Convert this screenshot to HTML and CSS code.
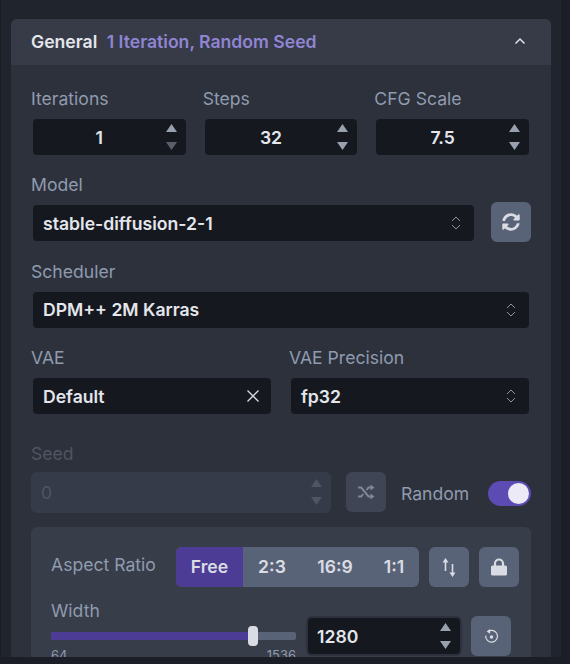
FILE: index.html
```html
<!DOCTYPE html>
<html lang="en">
<head>
    <meta charset="UTF-8">
    <title>General</title>
    <link rel="stylesheet" href="styles.css">
</head>
<body>
    <svg width="0" height="0" class="defs">
        <symbol id="updown" viewBox="0 0 10 16"><path d="M1 6 5 2 9 6M1 10 5 14 9 10" fill="none" stroke="currentColor" stroke-width="1"/></symbol>
        <symbol id="up" viewBox="0 0 11 8"><path d="M5.500 0 11 8H0z" fill="currentColor"/></symbol>
        <symbol id="down" viewBox="0 0 11 8"><path d="M5.500 8 11 0H0z" fill="currentColor"/></symbol>
    </svg>
    <div class="sidebar">
        <div class="panel">
            <div class="panel-header">
                <div class="title">General <span class="summary">1 Iteration, Random Seed</span></div>
                <svg class="chevron" width="12" height="8" viewBox="0 0 12 8"><path d="M1.500 6.500 6 2l4.500 4.500" fill="none" stroke="currentColor" stroke-width="1.500"/></svg>
            </div>
            <div class="panel-body">
                <div class="row three">
                    <div class="field">
                        <div class="label">Iterations</div>
                        <div class="input number center"><span>1</span>
                            <div class="stepper"><svg class="step"><use href="#up"/></svg><svg class="step dim"><use href="#down"/></svg></div>
                        </div>
                    </div>
                    <div class="field">
                        <div class="label">Steps</div>
                        <div class="input number center"><span>32</span>
                            <div class="stepper"><svg class="step"><use href="#up"/></svg><svg class="step"><use href="#down"/></svg></div>
                        </div>
                    </div>
                    <div class="field">
                        <div class="label">CFG Scale</div>
                        <div class="input number center"><span>7.5</span>
                            <div class="stepper"><svg class="step"><use href="#up"/></svg><svg class="step"><use href="#down"/></svg></div>
                        </div>
                    </div>
                </div>

                <div class="row model">
                    <div class="field grow">
                        <div class="label">Model</div>
                        <div class="input select"><span>stable-diffusion-2-1</span><svg class="updown"><use href="#updown"/></svg></div>
                    </div>
                    <button class="icon-btn refresh">
                        <svg width="18" height="18" viewBox="0 0 512 512"><path fill="currentColor" d="M370.700 133.300C339.500 104 298.900 88 255.800 88c-77.500.1-144.300 53.200-162.800 126.900-1.300 5.400-6.100 9.200-11.700 9.200H24.100c-7.500 0-13.200-6.800-11.800-14.200C33.900 94.900 134.800 8 256 8c66.400 0 126.800 26.100 171.300 68.700L463 41c15.100-15.100 41-4.400 41 17v134c0 13.300-10.700 24-24 24H346c-21.400 0-32.100-25.900-17-41l41.700-41.700zM32 296h134c21.400 0 32.100 25.900 17 41l-41.700 41.700c31.200 29.300 71.800 45.300 114.900 45.300 77.400-.1 144.300-53.100 162.800-126.800 1.300-5.400 6.100-9.200 11.700-9.200h57.300c7.500 0 13.200 6.800 11.800 14.200C478.100 417.100 377.200 504 256 504c-66.400 0-126.800-26.100-171.300-68.700L49 471c-15.100 15.100-41 4.400-41-17V320c0-13.300 10.700-24 24-24z"/></svg>
                    </button>
                </div>

                <div class="field">
                    <div class="label">Scheduler</div>
                    <div class="input select"><span>DPM++ 2M Karras</span><svg class="updown"><use href="#updown"/></svg></div>
                </div>

                <div class="row two">
                    <div class="field">
                        <div class="label">VAE</div>
                        <div class="input select"><span>Default</span>
                            <svg class="clear" width="14" height="14" viewBox="0 0 14 14"><path d="M1.500 1.500l11 11M12.500 1.500l-11 11" fill="none" stroke="currentColor" stroke-width="1.300"/></svg>
                        </div>
                    </div>
                    <div class="field">
                        <div class="label">VAE Precision</div>
                        <div class="input select"><span>fp32</span><svg class="updown"><use href="#updown"/></svg></div>
                    </div>
                </div>

                <div class="seed">
                    <div class="label disabled">Seed</div>
                    <div class="seed-row">
                        <div class="input number disabled-input"><span>0</span>
                            <div class="stepper"><svg class="step"><use href="#up"/></svg><svg class="step"><use href="#down"/></svg></div>
                        </div>
                        <button class="icon-btn shuffle">
                            <svg width="18" height="16" viewBox="0 0 18 16"><path d="M1 3.500h3.200l7.300 9H14M1 12.500h3.200l2-2.500M9.500 6l2-2.500H14" fill="none" stroke="currentColor" stroke-width="2"/><path d="M13.500 0.500 17.500 3.500 13.500 6.500zM13.500 9.500 17.500 12.500 13.500 15.500z" fill="currentColor"/></svg>
                        </button>
                        <div class="random">
                            <span class="label-inline">Random</span>
                            <div class="toggle"><div class="knob"></div></div>
                        </div>
                    </div>
                </div>

                <div class="size-box">
                    <div class="aspect">
                        <span class="label-inline">Aspect Ratio</span>
                        <div class="segments">
                            <div class="segment active">Free</div>
                            <div class="segment">2:3</div>
                            <div class="segment">16:9</div>
                            <div class="segment">1:1</div>
                        </div>
                        <button class="icon-btn">
                            <svg width="14" height="19" viewBox="0 0 14 19"><path d="M3.500 3v10M10.500 6v10" fill="none" stroke="currentColor" stroke-width="1.600"/><path d="M0.500 4.500 3.500 0 6.500 4.500zM7.500 14.500 10.500 19 13.500 14.500z" fill="currentColor"/></svg>
                        </button>
                        <button class="icon-btn">
                            <svg width="16" height="18" viewBox="0 0 16 18"><path d="M4 8V5.500a4 4 0 0 1 8 0V8" fill="none" stroke="currentColor" stroke-width="2.200"/><rect x="0" y="7.500" width="16" height="10" rx="1.500" fill="currentColor"/></svg>
                        </button>
                    </div>
                    <div class="width-row">
                        <div class="slider-col">
                            <div class="label">Width</div>
                            <div class="slider">
                                <div class="track"><div class="fill"></div></div>
                                <div class="thumb"></div>
                            </div>
                            <div class="marks"><span>64</span><span>1536</span></div>
                        </div>
                        <div class="input number small"><span>1280</span>
                            <div class="stepper"><svg class="step"><use href="#up"/></svg><svg class="step"><use href="#down"/></svg></div>
                        </div>
                        <button class="icon-btn reset">
                            <svg width="15" height="15" viewBox="0 0 16 16"><path d="M4.500 2.500A6.300 6.300 0 1 1 1.800 7" fill="none" stroke="currentColor" stroke-width="1.300"/><path d="M6.500 0 6.500 5 2.800 2.700z" fill="currentColor"/><circle cx="8" cy="8.500" r="1.800" fill="currentColor"/></svg>
                        </button>
                    </div>
                </div>
            </div>
        </div>
    </div>
</body>
</html>
```

FILE: styles.css
```css
* {
    box-sizing: border-box;
}

html, body {
    margin: 0;
    height: 664px;
    overflow: hidden;
}

body {
    background-color: #1b1e26;
    font-family: 'Inter', sans-serif;
    font-size: 17.6px;
    color: #e4e6ec;
}

.defs {
    position: absolute;
}

.sidebar {
    width: 560px;
    height: 657px;
    margin-left: 1px;
    padding: 19px 10px 0 10px;
    background-color: #20242c;
    overflow: hidden;
}

.panel {
    background-color: #2d313c;
    border-radius: 6px 6px 0 0;
    height: 700px;
}

.panel-header {
    height: 46px;
    background-color: #363b47;
    border-radius: 6px 6px 0 0;
    padding: 0 25px 2px 20px;
    display: flex;
    align-items: center;
    justify-content: space-between;
}

.title {
    font-weight: 600;
    color: #e4e6ec;
}

.summary {
    color: #8f85d2;
    margin-left: 5px;
}

.chevron {
    color: #dfe2e8;
}

.panel-body {
    padding: 20px 20px 0;
    display: flex;
    flex-direction: column;
    gap: 14.4px;
}

.row {
    display: grid;
}

.three {
    grid-template-columns: repeat(3, 1fr);
    column-gap: 15px;
}

.two {
    grid-template-columns: 1fr 1fr;
    column-gap: 16px;
}

.model {
    display: flex;
    align-items: flex-end;
    gap: 15px;
}

.grow {
    flex: 1;
}

.label {
    color: #8f9bae;
    line-height: 27px;
    margin-bottom: 7px;
}

.label.disabled {
    color: #4f5562;
    margin-bottom: 5px;
}

.label-inline {
    color: #8f9bae;
}

.input {
    height: 36px;
    margin: 2px;
    background-color: #15181f;
    border-radius: 4px;
    font-weight: 600;
    display: flex;
    align-items: center;
    justify-content: space-between;
    padding: 0 10px;
    position: relative;
}

.center span {
    width: 100%;
    text-align: center;
    padding-right: 20px;
}

.select .updown {
    width: 10px;
    height: 16px;
    color: #8d93a0;
    margin-right: 3px;
}

.clear {
    color: #d9dce3;
    margin-right: 1px;
}

.stepper {
    position: absolute;
    right: 9px;
    top: 0;
    bottom: 0;
    display: flex;
    flex-direction: column;
    justify-content: center;
    gap: 10px;
}

.step {
    display: block;
    width: 11px;
    height: 8px;
    color: #9aa1ae;
}

.step.dim {
    color: #595e6b;
}

.icon-btn {
    width: 40px;
    height: 40px;
    flex: none;
    padding: 0;
    border: none;
    border-radius: 6px;
    background-color: #596377;
    color: #d9dce3;
    display: flex;
    align-items: center;
    justify-content: center;
}

.refresh {
    margin-bottom: 1px;
}

.seed {
    margin-top: 9.400px;
}

.seed-row {
    display: flex;
    align-items: flex-start;
}

.disabled-input {
    width: 300px;
    height: 41px;
    margin: 0;
    background-color: #353b48;
    color: #4f5562;
    font-weight: 400;
    border-radius: 6px;
    flex: none;
}

.disabled-input .step {
    color: #4f5562;
}

.shuffle {
    margin-left: 15px;
    background-color: #3f4554;
    color: #7f8694;
}

.random {
    margin-left: 15px;
    flex: 1;
    height: 41px;
    padding-top: 2px;
    display: flex;
    align-items: center;
    justify-content: space-between;
}

.toggle {
    width: 43px;
    height: 25px;
    border-radius: 13px;
    background-color: #5b4bb3;
    padding: 2px;
    display: flex;
    justify-content: flex-end;
}

.knob {
    width: 21px;
    height: 21px;
    border-radius: 50%;
    background-color: #eceaf6;
}

.size-box {
    background-color: #383d4a;
    border-radius: 6px;
    padding: 20px 12px 20px 20px;
}

.aspect {
    display: flex;
    align-items: center;
    gap: 10px;
}

.aspect .label-inline {
    width: 115px;
    flex: none;
    padding-bottom: 5px;
}

.segments {
    height: 40px;
    display: grid;
    grid-template-columns: 67px 58px 68px 50px;
    flex: none;
    border-radius: 6px;
    overflow: hidden;
    background-color: #596377;
    font-weight: 600;
}

.segment {
    padding-bottom: 1px;
    display: flex;
    align-items: center;
    justify-content: center;
    color: #d9dce3;
}

.segment.active {
    background-color: #4c3c96;
}

.width-row {
    display: flex;
    align-items: flex-start;
    margin-top: 10px;
}

.slider-col {
    width: 245px;
    flex: none;
}

.slider {
    position: relative;
    height: 20px;
    margin-top: -6px;
}

.track {
    position: absolute;
    left: 0;
    right: 0;
    top: 7px;
    height: 8px;
    border-radius: 2px;
    background-color: #596377;
}

.fill {
    width: 201px;
    height: 100%;
    border-radius: 2px 0 0 2px;
    background-color: #4c3c96;
}

.thumb {
    position: absolute;
    left: 197px;
    top: 1px;
    width: 10px;
    height: 20px;
    border-radius: 4px;
    background-color: #d9dce3;
}

.marks {
    display: flex;
    justify-content: space-between;
    font-size: 13px;
    color: #8f9bae;
    margin-top: 2px;
}

.small {
    width: 152px;
    height: 36px;
    margin: 21px 0 0 12px;
    padding: 0 9px;
    flex: none;
    box-shadow: 0 0 0 2px #2d313c;
}

.reset {
    margin: 19px 0 0 11px;
}
```
